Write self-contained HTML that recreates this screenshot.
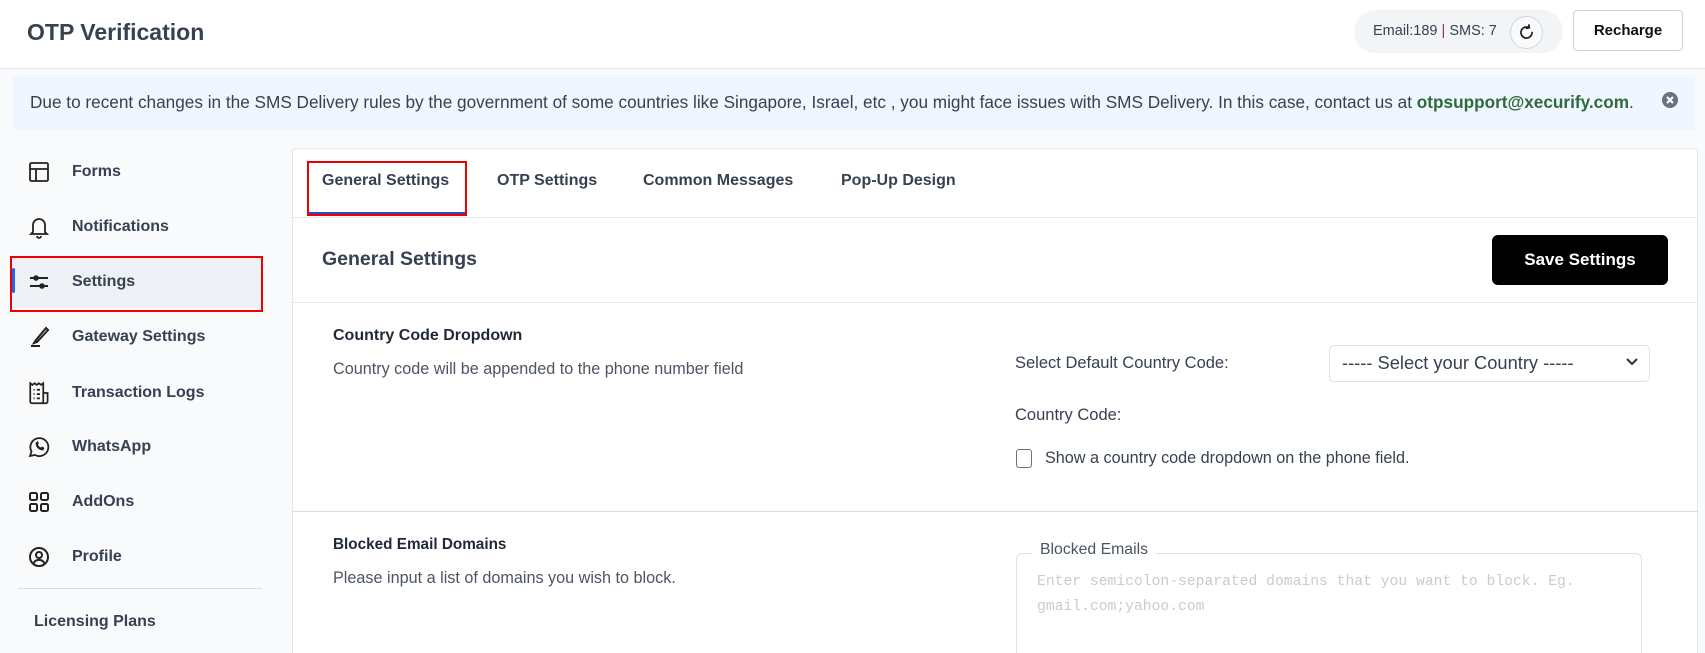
<!DOCTYPE html>
<html style="width:1705px;height:653px;overflow:hidden"><head><meta charset="utf-8"><style>
*{box-sizing:border-box;margin:0;padding:0}
body{width:1705px;height:653px;overflow:hidden;background:#f8fafc;font-family:"Liberation Sans",sans-serif;color:#374151;position:relative}
.a{position:absolute;white-space:nowrap}
.b{font-weight:bold}
.nav{position:absolute;left:72px;font-size:16px;font-weight:bold;color:#374151;transform:translateY(-50%)}
.ic{position:absolute;left:27px;width:24px;height:24px;transform:translateY(-50%)}
.tab{position:absolute;top:172px;font-size:16px;font-weight:bold;color:#374151}
</style></head><body>
<div class="a" style="left:0;top:0;width:1705px;height:69px;background:#fff;border-bottom:1px solid #e5e7eb"></div>
<div class="a" style="left:27px;top:19px;font-size:23px;font-weight:bold;color:#374151">OTP Verification</div>
<div class="a" style="left:1354px;top:10px;width:209px;height:43px;background:#f3f4f6;border-radius:22px"></div>
<div class="a" style="left:1373px;top:23px;font-size:14.5px;color:#374151">Email:189 <span style="color:#7c3a5a">|</span> SMS: 7</div>
<div class="a" style="left:1510px;top:16px;width:33px;height:33px;border-radius:50%;border:1px solid #d1d5db;background:#f9fafb"></div>
<svg class="a" style="left:1517px;top:23px" width="19" height="19" viewBox="0 0 24 24" fill="none" stroke="#222" stroke-width="2.2" stroke-linecap="round"><path d="M19 12a7 7 0 1 1-4-6.3"/><path d="M15 2.5l.5 3.5-3.5.8"/></svg>
<div class="a" style="left:1573px;top:10px;width:110px;height:41px;border:1px solid #d1d5db;border-radius:4px;background:#fff;font-size:15px;font-weight:bold;color:#111;text-align:center;line-height:39px">Recharge</div>

<div class="a" style="left:13px;top:76px;width:1682px;height:54px;background:#eff6ff"></div>
<div class="a" style="left:30px;top:92px;font-size:17.2px;color:#374151">Due to recent changes in the SMS Delivery rules by the government of some countries like Singapore, Israel, etc , you might face issues with SMS Delivery. In this case, contact us at <b style="color:#2e6b3a">otpsupport@xecurify.com</b>.</div>
<svg class="a" style="left:1662px;top:92px" width="16" height="16" viewBox="0 0 16 16"><circle cx="8" cy="8" r="8" fill="#6b7280"/><path d="M5 5l6 6M11 5l-6 6" stroke="#fff" stroke-width="2.2"/></svg>

<div class="a" style="left:12px;top:258px;width:249px;height:50px;background:#eef1f5"></div>
<div class="a" style="left:12px;top:268px;width:3px;height:25px;background:#2563eb;border-radius:2px"></div>
<div class="a" style="left:10px;top:256px;width:253px;height:56px;border:2px solid #e00"></div>

<svg class="ic" style="top:172px" viewBox="0 0 24 24" fill="none" stroke="#222" stroke-width="1.8"><rect x="3" y="3" width="18" height="18" rx="1.5"/><path d="M3 9h18M9 9v12"/></svg>
<div class="nav" style="top:172px">Forms</div>
<svg class="ic" style="top:227px" viewBox="0 0 24 24" fill="none" stroke="#222" stroke-width="1.8"><path d="M6 17V10a6 6 0 0 1 12 0v7l2 2H4z"/><path d="M10 21a2 2 0 0 0 4 0"/></svg>
<div class="nav" style="top:227px">Notifications</div>
<svg class="ic" style="top:282px" viewBox="0 0 24 24" fill="none" stroke="#222" stroke-width="2"><path d="M3 8h18M3 16h18"/><circle cx="9" cy="8" r="1.8" fill="#222"/><circle cx="15" cy="16" r="1.8" fill="#222"/></svg>
<div class="nav" style="top:282px">Settings</div>
<svg class="ic" style="top:337px" viewBox="0 0 24 24" fill="none" stroke="#222" stroke-width="2"><path d="M19 3L9 15l-2 3 3-1 11-12z"/><path d="M4 21h9"/></svg>
<div class="nav" style="top:337px">Gateway Settings</div>
<svg class="ic" style="top:393px;width:26px;height:26px" viewBox="0 0 24 24" fill="none" stroke="#222" stroke-width="1.6"><path d="M3 3l2 1.5L7 3l2 1.5L11 3l2 1.5L15 3v17a1.5 1.5 0 0 1-1.5 1.5h-9A1.5 1.5 0 0 1 3 20z"/><path d="M15 12h4v8a1.5 1.5 0 0 1-1.5 1.5H14"/><path d="M6 9h1M9 9h3M6 13h1M9 13h3M6 17h1M9 17h3"/></svg>
<div class="nav" style="top:393px">Transaction Logs</div>
<svg class="ic" style="top:447px" viewBox="0 0 24 24" fill="none" stroke="#222" stroke-width="1.8"><path d="M3 21l1.5-4.5A9 9 0 1 1 8 20z"/><path d="M9 8c0 4 3 7 7 7l1-2-2-1-1 1c-1.5-.5-3-2-3.5-3.5l1-1-1-2z" fill="#222" stroke-width="0.8"/></svg>
<div class="nav" style="top:447px">WhatsApp</div>
<svg class="ic" style="top:502px" viewBox="0 0 24 24" fill="none" stroke="#222" stroke-width="2"><rect x="3" y="3" width="7" height="7" rx="1.5"/><rect x="14" y="3" width="7" height="7" rx="1.5"/><rect x="3" y="14" width="7" height="7" rx="1.5"/><rect x="14" y="14" width="7" height="7" rx="1.5"/></svg>
<div class="nav" style="top:502px">AddOns</div>
<svg class="ic" style="top:557px" viewBox="0 0 24 24" fill="none" stroke="#222" stroke-width="2"><circle cx="12" cy="12" r="9"/><circle cx="12" cy="10" r="3"/><path d="M6.5 18.5a6 6 0 0 1 11 0"/></svg>
<div class="nav" style="top:557px">Profile</div>
<div class="a" style="left:18px;top:588px;width:244px;height:1px;background:#d9dce1"></div>
<div class="nav" style="top:622px;left:34px">Licensing Plans</div>

<div class="a" style="left:292px;top:148px;width:1406px;height:505px;background:#fff;border:1px solid #e5e7eb;border-bottom:none;border-radius:4px 4px 0 0"></div>
<div class="a" style="left:292px;top:217px;width:1406px;height:1px;background:#e5e7eb"></div>
<div class="a" style="left:308px;top:212px;width:158px;height:3px;background:#2b4acb"></div>
<div class="a" style="left:307px;top:161px;width:160px;height:55px;border:2px solid #e00"></div>
<div class="tab" style="left:322px">General Settings</div>
<div class="tab" style="left:497px">OTP Settings</div>
<div class="tab" style="left:643px">Common Messages</div>
<div class="tab" style="left:841px">Pop-Up Design</div>

<div class="a" style="left:322px;top:248px;font-size:19.5px;font-weight:bold;color:#374151">General Settings</div>
<div class="a" style="left:1492px;top:235px;width:176px;height:50px;background:#000;border-radius:6px;color:#fff;font-size:17px;font-weight:bold;text-align:center;line-height:50px">Save Settings</div>
<div class="a" style="left:292px;top:302px;width:1406px;height:1px;background:#e5e7eb"></div>

<div class="a b" style="left:333px;top:327px;font-size:16px;color:#1f2937">Country Code Dropdown</div>
<div class="a" style="left:333px;top:360px;font-size:16.2px;color:#4b5563">Country code will be appended to the phone number field</div>
<div class="a" style="left:1015px;top:354px;font-size:16.5px;color:#374151">Select Default Country Code:</div>
<div class="a" style="left:1329px;top:345px;width:321px;height:37px;border:1.5px solid #dbe1ea;border-radius:5px;background:#fff"></div>
<div class="a" style="left:1342px;top:352px;font-size:18.3px;color:#374151">----- Select your Country -----</div>
<svg class="a" style="left:1626px;top:357px" width="12" height="10" viewBox="0 0 12 10" fill="none" stroke="#333" stroke-width="2"><path d="M1 2l5 5 5-5"/></svg>
<div class="a" style="left:1015px;top:406px;font-size:16.5px;color:#374151">Country Code:</div>
<div class="a" style="left:1016px;top:449px;width:16px;height:19px;border:1.5px solid #6b7280;border-radius:3px"></div>
<div class="a" style="left:1045px;top:449px;font-size:16.2px;color:#374151">Show a country code dropdown on the phone field.</div>
<div class="a" style="left:292px;top:511px;width:1406px;height:1px;background:#d9dce1"></div>

<div class="a b" style="left:333px;top:536px;font-size:15.3px;color:#1f2937">Blocked Email Domains</div>
<div class="a" style="left:333px;top:569px;font-size:16.2px;color:#4b5563">Please input a list of domains you wish to block.</div>
<div class="a" style="left:1016px;top:553px;width:626px;height:100px;border:1.5px solid #dbe1ea;border-bottom:none;border-radius:6px 6px 0 0"></div>
<div class="a" style="left:1032px;top:541px;padding:0 8px;background:#fff;font-size:15.8px;color:#4b5563">Blocked Emails</div>
<div class="a" style="left:1037px;top:570px;font-family:'Liberation Mono',monospace;font-size:14.7px;line-height:25px;color:#c8cbd0">Enter semicolon-separated domains that you want to block. Eg.<br>gmail.com;yahoo.com</div>
</body></html>
